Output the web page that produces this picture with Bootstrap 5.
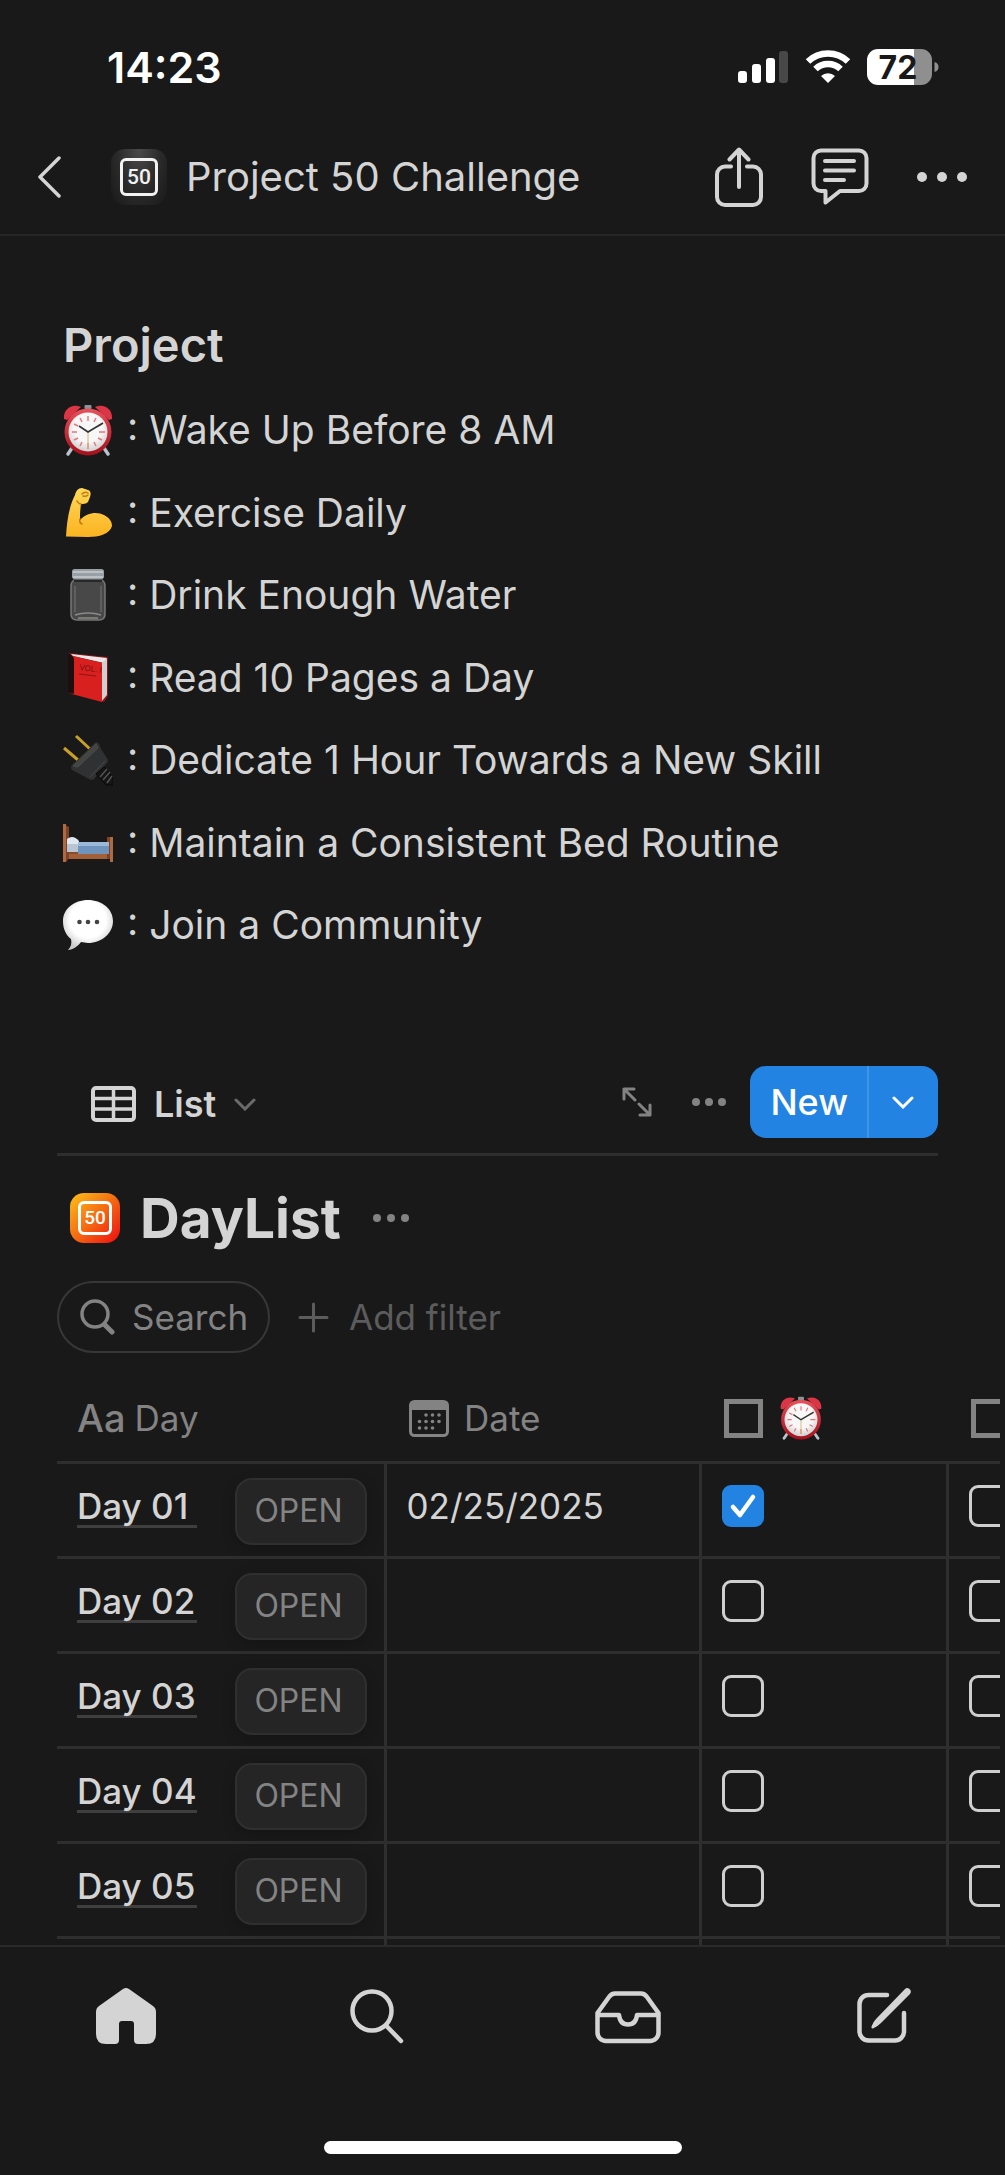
<!DOCTYPE html>
<html lang="en" data-bs-theme="dark">
<head>
<meta charset="utf-8">
<meta name="viewport" content="width=device-width, initial-scale=1">
<title>Project 50 Challenge</title>
<link href="https://cdn.jsdelivr.net/npm/bootstrap@5.3.0/dist/css/bootstrap.min.css" rel="stylesheet">
<style>
:root { --ink: #d4d4d4; --dim: #838383; --faint: #5c5c5c; --rule: #2e2e2e; --blue: #2383e2; --bg: #191919; }
body { font-family: Inter, "Liberation Sans", sans-serif; background: var(--bg); color: var(--ink); font-size: 39px; line-height: 60px; }
h1, h2 { color: var(--ink); }
svg { display: block; flex: none; }
button.bare { background: none; border: 0; padding: 0; color: inherit; }
.statusbar { height: 120px; padding: 14px 66px 0 107px; color: #fff; }
.clock-text { font-size: 43px; font-weight: 600; }
.topbar { height: 116px; border-bottom: 2px solid #262626; padding: 0 38px 0 37px; }
.page-title { font-size: 40px; font-weight: 400; margin-left: 19px; }
.tile { width: 56px; height: 56px; border-radius: 14px; background: radial-gradient(ellipse at 50% 0, #4a4a4a, #2a2a2a 55%, #191919 100%); }
.topbar .tile { margin-left: 50px; }
.tile span { width: 38px; height: 38px; border: 3px solid #f2f2f2; border-radius: 6px; font: 500 21px/32px Roboto, sans-serif; color: #f2f2f2; text-align: center; }
.tile-hot { width: 50px; height: 50px; background: linear-gradient(135deg, #fbb917 5%, #f56a12 50%, #ee1511 95%); }
.tile-hot span { width: 34px; height: 34px; font-size: 19px; line-height: 28px; color: #fff; border-color: #fff; }
.habits { padding: 79px 62px 0 63px; }
.habits h2 { font-size: 47px; font-weight: 600; line-height: 60px; margin: 0 0 25px; }
.habits ul { height: 555px; }
.habits li { height: 60px; gap: 14px; }
.db { padding: 0 67px 0 57px; }
.viewbar { height: 90px; margin-top: 111px; padding-left: 34px; border-bottom: 3px solid var(--rule); }
.view-name { font-size: 36px; font-weight: 600; gap: 18px; }
.new-group .btn { --bs-btn-bg: var(--blue); --bs-btn-border-color: var(--blue); --bs-btn-color: #fff; height: 72px; border: 0; border-radius: 16px; font-size: 36px; font-weight: 500; line-height: 60px; padding: 0 20px; }
.new-group .btn + .btn { border-left: 2px solid #4394e6; width: 71px; padding: 0 23px; }
.db-title { padding: 27px 0 0 13px; }
.db-title h1 { font-size: 55px; font-weight: 700; line-height: 70px; margin: 0 32px 0 20px; }
.tools { margin-top: 28px; font-size: 35px; color: var(--faint); gap: 28px; }
.add-filter { gap: 20px; }
.search-pill { width: 213px; height: 72px; border: 2px solid #373737; border-radius: 36px; color: var(--dim); padding: 0 16px 0 21px; gap: 17px; }
.search-pill input { background: none; border: 0; padding: 0; width: 125px; color: var(--ink); outline: 0; }
.search-pill input::placeholder { color: var(--dim); opacity: 1; }
.grid-wrap { margin: 24px 5px 0 57px; overflow: hidden; }
.day-grid { table-layout: fixed; width: 1137px; margin: 0; --bs-table-bg: transparent; --bs-table-color: var(--ink); font-size: 35px; }
.day-grid th, .day-grid td { padding: 0; vertical-align: top; border-bottom: 3px solid var(--rule); }
.day-grid th { height: 85px; padding: 11px 20px 10px; font-weight: 400; color: var(--dim); }
.day-grid td { height: 95px; padding: 14px 20px 0; border-right: 3px solid var(--rule); line-height: 56px; }
.day-grid th .head { height: 60px; gap: 15px; }
.aa { font-size: 38px; font-weight: 500; margin-right: -6px; }
.day-link { color: var(--ink); font-weight: 500; text-decoration: none; border-bottom: 3px solid #3f3f3f; line-height: 56px; height: 50px; min-width: 120px; }
.btn-open { --bs-btn-color: var(--dim); --bs-btn-bg: #252525; --bs-btn-border-color: #2f2f2f; width: 132px; height: 67px; border-width: 2px; border-radius: 17px; font-size: 32px; line-height: 60px; padding: 0 4px 0 0; margin-right: -3px; box-shadow: 0 4px 14px #0003; }
.box-glyph { width: 39px; height: 39px; border: 5px solid var(--dim); margin-left: 4px; }
.day-grid td .form-check-input { display: block; width: 42px; height: 42px; margin: 7px 0 0; border: 3px solid #cfcfcf; border-radius: 9px; background-color: transparent; }
.day-grid td .form-check-input:checked { background-color: var(--blue); border-color: var(--blue); background-size: 42px 42px; background-image: url("data:image/svg+xml,%3Csvg xmlns='http://www.w3.org/2000/svg' viewBox='0 0 42 42'%3E%3Cpath d='M11 22l7 8 13-18' fill='none' stroke='%23fff' stroke-width='4.5' stroke-linecap='round' stroke-linejoin='round'/%3E%3C/svg%3E"); }
.tabbar { height: 230px; border-top: 2px solid #2a2a2a; background: var(--bg); }
.tabbar nav { height: 138px; }
.home-bar { width: 358px; height: 13px; border-radius: 7px; background: #fff; margin-top: 56px; }
</style>
<script src="https://cdn.jsdelivr.net/npm/bootstrap@5.3.0/dist/js/bootstrap.bundle.min.js"></script>
</head>
<body>
<svg width="0" height="0" class="position-absolute" aria-hidden="true">
  <defs>
    <radialGradient id="gFace" cx=".5" cy=".4" r=".6"><stop offset=".6" stop-color="#f7f7f7"/><stop offset="1" stop-color="#cfcfcf"/></radialGradient>
    <linearGradient id="gRed" x2="0" y2="1"><stop stop-color="#e8505b"/><stop offset="1" stop-color="#a3101c"/></linearGradient>
    <symbol id="alarm" viewBox="0 0 50 52">
      <path d="M9 44l-4 6M41 44l4 6" stroke="#b9c3cc" stroke-width="3.4" stroke-linecap="round"/>
      <rect x="21.500" y="1" width="7" height="4" rx="1" fill="#8c9298"/>
      <path d="M1 15C0 6 8-1 18 3L4 16zM49 15C50 6 42-1 32 3l14 13z" fill="#dc3545"/>
      <circle cx="25" cy="28" r="23.500" fill="url(#gRed)"/>
      <circle cx="25" cy="28" r="19.500" fill="url(#gFace)"/>
      <path d="M25 12v5M25 39v6M9 28h5M36 28h6M17 14l2 4M33 14l-2 4M11 20l4 2M39 20l-4 2M11 36l4-2M39 36l-4-2M17 42l2-4M33 42l-2-4" stroke="#e8747a" stroke-width="1.400"/>
      <path d="M25 28v16" stroke="#d8b26a" stroke-width="1"/>
      <path d="M16 22l9 6 15-9" fill="none" stroke="#333" stroke-width="1.600"/>
    </symbol>
  </defs>
</svg>

<div class="d-flex flex-column vh-100">
  <div class="statusbar d-flex flex-shrink-0 align-items-center justify-content-between">
    <span class="clock-text">14:23</span>
    <div class="d-flex align-items-center">
      <svg width="51" height="34" viewBox="0 0 51 34" fill="#fff" role="img" aria-label="Signal"><rect y="21" width="9" height="12" rx="3"/><rect x="14" y="14" width="9" height="19" rx="3"/><rect x="28" y="8" width="9" height="25" rx="3"/><rect x="41" y="1" width="9" height="32" rx="3" fill="#484848"/></svg>
      <svg class="ms-3" width="46" height="34" viewBox="0 0 46 34" role="img" aria-label="Wi-Fi"><g fill="none" stroke="#fff" stroke-width="6.500"><path d="M3 11.500a29 29 0 0 1 40 0"/><path d="M10.500 19a18 18 0 0 1 25 0"/></g><path d="M23 33l-7-7a10 10 0 0 1 14 0z" fill="#fff"/></svg>
      <svg class="ms-3" width="72" height="36" viewBox="0 0 72 36" role="img" aria-label="Battery 72 percent"><path d="M11 0h36v36H11A11 11 0 0 1 0 25V11A11 11 0 0 1 11 0z" fill="#fff"/><path d="M47 0h7a11 11 0 0 1 11 11v14a11 11 0 0 1-11 11h-7zM67.500 13q4 1 4 5t-4 5z" fill="#8f8f8f"/><text x="31" y="29.500" text-anchor="middle" font-family="Inter" font-weight="700" font-size="32" fill="#191919">72</text></svg>
    </div>
  </div>

  <header class="topbar d-flex flex-shrink-0 align-items-center">
    <button class="bare" type="button" aria-label="Back"><svg width="24" height="42" viewBox="0 0 24 42" fill="none" stroke="#d4d4d4" stroke-width="3.500" stroke-linecap="round" stroke-linejoin="round"><path d="M22 2L3 21l19 19"/></svg></button>
    <div class="tile d-flex align-items-center justify-content-center"><span>50</span></div>
    <div class="page-title me-auto">Project 50 Challenge</div>
    <div class="d-flex align-items-center gap-5">
      <button class="bare" type="button" aria-label="Share"><svg width="48" height="60" viewBox="0 0 48 60" fill="none" stroke="#d4d4d4" stroke-width="4" stroke-linecap="round" stroke-linejoin="round"><path d="M16 19.500h-6a8 8 0 0 0-8 8V50a8 8 0 0 0 8 8h28a8 8 0 0 0 8-8V27.500a8 8 0 0 0-8-8h-6M24 40V3M14.500 12.500L24 2.500l9.500 10"/></svg></button>
      <button class="bare" type="button" aria-label="Comments"><svg width="58" height="58" viewBox="0 0 58 58" fill="none" stroke="#d4d4d4" stroke-width="4" stroke-linecap="round" stroke-linejoin="round"><path d="M10 2.500h38a7.500 7.500 0 0 1 7.500 7.500v25.500A7.500 7.500 0 0 1 48 43H29L14.500 54.500V43H10a7.500 7.500 0 0 1-7.500-7.500V10A7.500 7.500 0 0 1 10 2.500zM14 13h29M14 22.500h29M14 32h19"/></svg></button>
      <button class="bare" type="button" aria-label="More"><svg width="50" height="10" viewBox="0 0 50 10" fill="#d4d4d4"><circle cx="5" cy="5" r="5"/><circle cx="25" cy="5" r="5"/><circle cx="45" cy="5" r="5"/></svg></button>
    </div>
  </header>

  <main class="flex-grow-1 overflow-hidden">
    <section class="habits">
      <h2>Project</h2>
      <ul class="list-unstyled d-flex flex-column justify-content-between mb-0">
        <li class="d-flex align-items-center"><svg width="50" height="52"><use href="#alarm"/></svg><span>: Wake Up Before 8 AM</span></li>
        <li class="d-flex align-items-center"><svg width="50" height="52" viewBox="0 0 50 52"><defs><linearGradient id="gArm" x2="0" y2="1"><stop stop-color="#ffd95a"/><stop offset="1" stop-color="#fbb321"/></linearGradient></defs><path d="M3 49.500C4 33 6 20 12 8c1-4 3-7 7-7l6 2c3 1 3 4 2 7l-2 5c-2 2-5 2-7 2-1 7-1 11-1 16 6-7 17-9 24-5 6 3 8 7 8 11-2 8-13 11-24 11z" fill="url(#gArm)"/><path d="M18 17c-2 0-3-1-4-3M19 7q3-3 6-1m-5 3q3 1 5-1M17 32q-1 4 2 5" fill="none" stroke="#c27c10" stroke-width="1.500" stroke-linecap="round"/></svg><span>: Exercise Daily</span></li>
        <li class="d-flex align-items-center"><svg width="50" height="52" viewBox="0 0 50 52"><path d="M11 11h28q3 2 3 6v28q0 6-6 6H14q-6 0-6-6V17q0-4 3-6z" fill="#484848" stroke="#787775" stroke-width="1.500"/><path d="M12 17v26M38 17v26" stroke="#5e5e5e" stroke-width="2"/><path d="M12 46q13-4 26 0M15 49h20" fill="none" stroke="#8a8a88" stroke-width="1.500"/><rect x="9" y="0" width="32" height="10" rx="2.500" fill="#98a0a5"/><path d="M10 3h30M10 8h30" stroke="#c6cbce" stroke-width="1.500"/><path d="M11 12h28" stroke="#26282a" stroke-width="2"/></svg><span>: Drink Enough Water</span></li>
        <li class="d-flex align-items-center"><svg width="50" height="52" viewBox="0 0 50 52"><path d="M6 1l39 4v39l-4 6L6 41z" fill="#8f1316"/><path d="M8 2l36 4-3 5L10 4z" fill="#e8e8e8"/><path d="M44 6v37l-5 6V11z" fill="#cfcfcf"/><path d="M10 4l29 7v39L9 42z" fill="#d8211f"/><path d="M5 3q1-2 3 0l3 3v36l-6-2z" fill="#1d0d0d"/><text x="16" y="18" transform="rotate(7 16 18)" font-family="Inter" font-size="8" fill="#7c1010">VOL. I</text><path d="M16 22l17 2" stroke="#8f1316"/></svg><span>: Read 10 Pages a Day</span></li>
        <li class="d-flex align-items-center"><svg width="50" height="52" viewBox="0 0 50 52"><path d="M1 14l14 12M13 2l14 13" stroke="#c7a126" stroke-width="3"/><path d="M33 8q4 1 4 5l8 13q0 3-2 4L31 45q-2 2-5 0L9 36q-2-3 0-5z" fill="#303132"/><path d="M33 10L10 32l5 1 20-19zM42 27L27 43" fill="#444" stroke="#4b4b4b"/><path d="M33 40l8-7 9 11v7h-7z" fill="#161616" stroke="#080808"/><path d="M37 43l7-8M40 46l7-8M44 49l5-7" stroke="#555" stroke-width="1.400"/></svg><span>: Dedicate 1 Hour Towards a New Skill</span></li>
        <li class="d-flex align-items-center"><svg width="50" height="52" viewBox="0 0 50 52"><path d="M4 31h44v11H4z" fill="#a35f38"/><path d="M4 36h44" stroke="#8a4c2b" stroke-width="2"/><path d="M0 7l6 3v31l-3 4H0z" fill="#7c4328"/><path d="M0 7h3v38H0zM47 20h3v25h-3z" fill="#b06a43"/><path d="M44 20h3v22h-3z" fill="#7c4328"/><path d="M4 27h12v8H4z" fill="#b9c5d3"/><path d="M4 22q6-5 12 2v3H4z" fill="#dfe7f0"/><path d="M15 25h31v12H15z" fill="#6f94bd"/><path d="M15 25h31v4H15z" fill="#9bb9d9"/></svg><span>: Maintain a Consistent Bed Routine</span></li>
        <li class="d-flex align-items-center"><svg width="50" height="52" viewBox="0 0 50 52"><defs><radialGradient id="gBub" cx=".5" cy=".4" r=".6"><stop offset=".6" stop-color="#fff"/><stop offset="1" stop-color="#c9c9c9"/></radialGradient></defs><path d="M25 1c14 0 25 9 25 21S39 44 25 44l-7-1c-3 4-8 8-13 8 3-3 4-7 3-11C3 36 0 30 0 22 0 10 11 1 25 1z" fill="url(#gBub)"/><g fill="#444"><circle cx="16.500" cy="23" r="2.300"/><circle cx="25" cy="23" r="2.300"/><circle cx="34" cy="23" r="2.300"/></g></svg><span>: Join a Community</span></li>
      </ul>
    </section>

    <section class="db">
      <div class="viewbar d-flex align-items-start">
        <button class="bare view-name d-flex align-items-center mt-2" type="button">
          <svg width="45" height="36" viewBox="0 0 45 36" fill="none" stroke="#d4d4d4"><rect x="2" y="2" width="41" height="32" rx="3" stroke-width="4"/><path d="M22.500 3v31M3 12.500h39M3 23h39" stroke-width="3.500"/></svg>
          List
          <svg width="22" height="13" viewBox="0 0 22 13" fill="none" stroke="#6b6b6b" stroke-width="3" stroke-linecap="round"><path d="M2 2l9 9 9-9"/></svg>
        </button>
        <div class="d-flex align-items-center ms-auto">
          <button class="bare" type="button" aria-label="Expand"><svg width="30" height="30" viewBox="0 0 30 30" fill="none" stroke="#838383" stroke-width="3" stroke-linecap="round" stroke-linejoin="round"><path d="M13 13L2 2M12 2H2v10M17 17l11 11M18 28h10V18"/></svg></button>
          <button class="bare mx-4 ps-3" type="button" aria-label="View options"><svg width="34" height="8" viewBox="0 0 34 8" fill="#838383"><circle cx="4" cy="4" r="4"/><circle cx="17" cy="4" r="4"/><circle cx="30" cy="4" r="4"/></svg></button>
          <div class="btn-group new-group">
            <button class="btn" type="button">New</button>
            <button class="btn" type="button" aria-label="New from template"><svg width="22" height="13" viewBox="0 0 22 13" fill="none" stroke="#fff" stroke-width="3" stroke-linecap="round"><path d="M2 2l9 9 9-9"/></svg></button>
          </div>
        </div>
      </div>

      <div class="db-title d-flex align-items-center">
        <div class="tile tile-hot d-flex align-items-center justify-content-center"><span>50</span></div>
        <h1>DayList</h1>
        <button class="bare" type="button" aria-label="Database options"><svg width="36" height="8" viewBox="0 0 36 8" fill="#838383"><circle cx="4" cy="4" r="4"/><circle cx="18" cy="4" r="4"/><circle cx="32" cy="4" r="4"/></svg></button>
      </div>

      <div class="tools d-flex align-items-center">
        <label class="search-pill d-flex align-items-center">
          <svg width="35" height="36" viewBox="0 0 35 36" fill="none" stroke="#838383" stroke-linecap="round" role="img" aria-label="Search"><circle cx="15" cy="15" r="13" stroke-width="3.500"/><path d="M25 26l7 7" stroke-width="5"/></svg>
          <input type="text" placeholder="Search">
        </label>
        <button class="bare add-filter d-flex align-items-center" type="button">
          <svg width="31" height="31" viewBox="0 0 31 31" stroke="#5c5c5c" stroke-width="3" stroke-linecap="round"><path d="M15.500 2v27M2 15.500h27"/></svg>
          Add filter
        </button>
      </div>
    </section>

    <div class="grid-wrap">
      <table class="table day-grid">
        <colgroup><col style="width:328px"><col style="width:315px"><col style="width:247px"><col style="width:247px"></colgroup>
        <thead>
          <tr>
            <th scope="col"><div class="head d-flex align-items-center"><span class="aa" aria-hidden="true">Aa</span>Day</div></th>
            <th scope="col"><div class="head d-flex align-items-center"><svg class="ms-1" width="40" height="37" viewBox="0 0 40 37"><rect x="1.500" y="1.500" width="37" height="34" rx="4" fill="none" stroke="#838383" stroke-width="3"/><path d="M1 4q0-3 3-3h32q3 0 3 3v6H1z" fill="#838383"/><g fill="#838383"><circle cx="17" cy="15" r="1.800"/><circle cx="23.500" cy="15" r="1.800"/><circle cx="30" cy="15" r="1.800"/><circle cx="10.500" cy="21.500" r="1.800"/><circle cx="17" cy="21.500" r="1.800"/><circle cx="23.500" cy="21.500" r="1.800"/><circle cx="30" cy="21.500" r="1.800"/><circle cx="10.500" cy="28" r="1.800"/><circle cx="17" cy="28" r="1.800"/><circle cx="23.500" cy="28" r="1.800"/></g></svg>Date</div></th>
            <th scope="col" aria-label="Wake up"><div class="head d-flex align-items-center"><span class="box-glyph"></span><svg width="46" height="44"><use href="#alarm"/></svg></div></th>
            <th scope="col" aria-label="Exercise"><div class="head d-flex align-items-center"><span class="box-glyph"></span></div></th>
          </tr>
        </thead>
        <tbody>
          <tr><td><div class="d-flex justify-content-between"><a class="day-link" href="#">Day 01</a><button class="btn btn-open" type="button">OPEN</button></div></td><td>02/25/2025</td><td><input class="form-check-input" type="checkbox" checked aria-label="Day 01 wake up"></td><td><input class="form-check-input" type="checkbox" aria-label="Day 01 exercise"></td></tr>
          <tr><td><div class="d-flex justify-content-between"><a class="day-link" href="#">Day 02</a><button class="btn btn-open" type="button">OPEN</button></div></td><td></td><td><input class="form-check-input" type="checkbox" aria-label="Day 02 wake up"></td><td><input class="form-check-input" type="checkbox" aria-label="Day 02 exercise"></td></tr>
          <tr><td><div class="d-flex justify-content-between"><a class="day-link" href="#">Day 03</a><button class="btn btn-open" type="button">OPEN</button></div></td><td></td><td><input class="form-check-input" type="checkbox" aria-label="Day 03 wake up"></td><td><input class="form-check-input" type="checkbox" aria-label="Day 03 exercise"></td></tr>
          <tr><td><div class="d-flex justify-content-between"><a class="day-link" href="#">Day 04</a><button class="btn btn-open" type="button">OPEN</button></div></td><td></td><td><input class="form-check-input" type="checkbox" aria-label="Day 04 wake up"></td><td><input class="form-check-input" type="checkbox" aria-label="Day 04 exercise"></td></tr>
          <tr><td><div class="d-flex justify-content-between"><a class="day-link" href="#">Day 05</a><button class="btn btn-open" type="button">OPEN</button></div></td><td></td><td><input class="form-check-input" type="checkbox" aria-label="Day 05 wake up"></td><td><input class="form-check-input" type="checkbox" aria-label="Day 05 exercise"></td></tr>
          <tr><td></td><td></td><td></td><td></td></tr>
        </tbody>
      </table>
    </div>
  </main>

  <footer class="tabbar flex-shrink-0">
    <nav class="row g-0 align-items-center" aria-label="Main">
      <a class="col d-flex justify-content-center" href="#" aria-label="Home"><svg width="60" height="56" viewBox="0 0 60 56" fill="#d4d4d4"><path d="M27 1q3-2 6 0l24 17q3 2 3 6v22q0 10-10 10h-8q-4 0-4-4V36q0-3-3-3h-9q-3 0-3 3v16q0 4-4 4h-9Q0 56 0 46V24q0-4 3-6z"/></svg></a>
      <a class="col d-flex justify-content-center" href="#" aria-label="Search"><svg width="54" height="56" viewBox="0 0 54 56" fill="none" stroke="#d4d4d4" stroke-width="4.500" stroke-linecap="round"><circle cx="22" cy="23" r="19.500"/><path d="M36.500 38L51 53"/></svg></a>
      <a class="col d-flex justify-content-center" href="#" aria-label="Inbox"><svg width="66" height="56" viewBox="0 0 66 56" fill="none" stroke="#d4d4d4" stroke-width="4.500" stroke-linejoin="round"><path d="M2.500 25L14 9q2.500-3.500 6-3.500h26q3.500 0 6 3.500l11.500 16v19.500a8.500 8.500 0 0 1-8.500 8.500H11a8.500 8.500 0 0 1-8.500-8.500zM2.500 27H24q1 9.500 9 9.500T42 27h21.500"/></svg></a>
      <a class="col d-flex justify-content-center" href="#" aria-label="New page"><svg width="64" height="56" viewBox="-10 0 64 56" fill="none" stroke="#d4d4d4" stroke-width="4.500" stroke-linecap="round"><path d="M30 7H11.500a9 9 0 0 0-9 9v27.500a9 9 0 0 0 9 9H38a9 9 0 0 0 9-9V25"/><path d="M48 1q2-2 4.500 0t.500 5L24 35q-4 4-8 5.500-2 0-1.500-2Q16 34 19 31z" fill="#d4d4d4" stroke="none"/></svg></a>
    </nav>
    <div class="home-bar mx-auto"></div>
  </footer>
</div>
</body>
</html>
